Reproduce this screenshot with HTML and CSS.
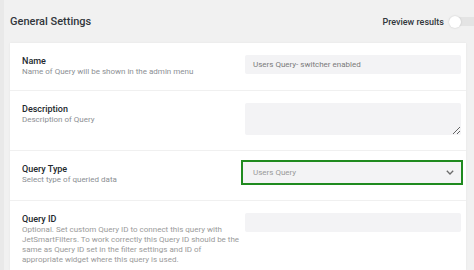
FILE: index.html
```html
<!DOCTYPE html>
<html>
<head>
<meta charset="utf-8">
<link rel="stylesheet" href="styles.css">
</head>
<body>
<div class="panel">
  <header class="head">
    <h1 class="title">General Settings</h1>
    <div class="preview">
      <span class="preview-label">Preview results</span>
      <span class="toggle"><span class="knob"></span></span>
    </div>
  </header>
  <section class="card">
    <div class="row row-name">
      <div class="info">
        <div class="label">Name</div>
        <div class="desc">Name of Query will be shown in the admin menu</div>
      </div>
      <div class="control">
        <div class="input">Users Query- switcher enabled</div>
      </div>
    </div>
    <div class="row row-desc">
      <div class="info">
        <div class="label">Description</div>
        <div class="desc">Description of Query</div>
      </div>
      <div class="control">
        <textarea class="textarea"></textarea>
      </div>
    </div>
    <div class="row row-type">
      <div class="info">
        <div class="label">Query Type</div>
        <div class="desc">Select type of queried data</div>
      </div>
      <div class="control">
        <div class="select">
          <span>Users Query</span>
          <svg class="chev" width="8" height="5" viewBox="0 0 8 5"><path d="M0.8 0.8l3.2 3.2 3.2-3.2" fill="none" stroke="#6b6b6b" stroke-width="1.3"/></svg>
        </div>
      </div>
    </div>
    <div class="row row-id">
      <div class="info">
        <div class="label">Query ID</div>
        <div class="desc long">Optional. Set custom Query ID to connect this query with<br>JetSmartFilters. To work correctly this Query ID should be the<br>same as Query ID set in the filter settings and ID of<br>appropriate widget where this query is used.</div>
      </div>
      <div class="control">
        <div class="input"></div>
      </div>
    </div>
  </section>
</div>
</body>
</html>
```
FILE: styles.css
```css
html, body {
  margin: 0;
  padding: 0;
  height: 100%;
  overflow: hidden;
}
body {
  background: #f1f1f1;
  font-family: Roboto, "Liberation Sans", sans-serif;
  color: #23282d;
}
.panel {
  border-left: 4px solid #e9e9e9;
  height: 100%;
  box-sizing: border-box;
  display: flex;
  flex-direction: column;
}
.head {
  height: 43px;
  flex: none;
  display: flex;
  align-items: center;
  justify-content: space-between;
  padding-left: 6px;
}
.title {
  margin: 0;
  font-size: 11px;
  font-weight: 500;
  color: #32373c;
}
.preview {
  display: flex;
  align-items: center;
  gap: 5px;
}
.preview-label {
  font-size: 9px;
  font-weight: 500;
  color: #32373c;
}
.toggle {
  width: 25px;
  height: 9px;
  border-radius: 5px 0 0 5px;
  background: #e4e4e4;
  display: flex;
  align-items: center;
}
.knob {
  width: 12px;
  height: 12px;
  border-radius: 50%;
  background: #fff;
  box-shadow: 0 0 2px rgba(0,0,0,.18);
}
.card {
  flex: 1;
  min-height: 0;
  overflow: hidden;
  background: #fff;
  margin: 0 8px 0 6px;
  box-shadow: 0 0 2px rgba(0,0,0,.06);
}
.row {
  display: flex;
  align-items: flex-start;
  padding: 12px 5px 0 12px;
  box-sizing: border-box;
  border-bottom: 1px solid #f0f0f0;
}
.row-name { height: 48px; }
.row-desc { height: 60px; }
.row-type { height: 50px; }
.row-id { border-bottom: 0; }
.info {
  width: 223px;
  padding-top: 1px;
}
.label {
  font-size: 9px;
  font-weight: 500;
  line-height: 11px;
  color: #23282d;
}
.desc {
  font-size: 8px;
  line-height: 10px;
  color: #8c8f94;
  white-space: nowrap;
}
.desc.long {
  color: #9a9a9a;
}
.control {
  flex: 1;
}
.input {
  height: 19px;
  background: #f3f3f5;
  border-radius: 2px;
  font-size: 8px;
  line-height: 19px;
  padding-left: 8px;
  color: #7a7a7a;
}
.textarea {
  display: block;
  width: 100%;
  height: 32px;
  box-sizing: border-box;
  margin: 0;
  border: 0;
  border-radius: 2px;
  background: #f3f3f5;
  resize: vertical;
  outline: none;
}
.select {
  margin: -3px -2px 0 -4px;
  height: 25px;
  box-sizing: border-box;
  border: 2px solid #1f8a1f;
  background: #f3f3f5;
  display: flex;
  align-items: center;
  justify-content: space-between;
  padding: 0 7px 0 10px;
  font-size: 8px;
  color: #999;
}
.chev {
  display: block;
}
```
